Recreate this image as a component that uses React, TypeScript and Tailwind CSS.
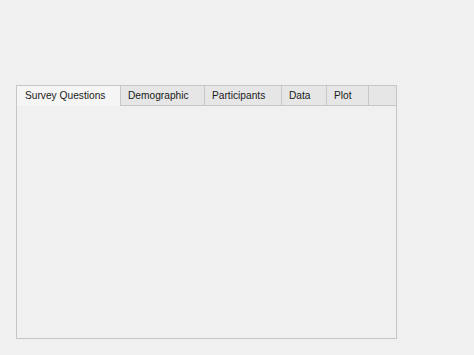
const tabs = [
  { label: "Survey Questions", w: "w-[104px]" },
  { label: "Demographic", w: "w-[84px]" },
  { label: "Participants", w: "w-[77px]" },
  { label: "Data", w: "w-[45px]" },
  { label: "Plot", w: "w-[42px]" },
];

export default function App() {
  return (
    <div
      className="w-[474px] h-[355px] bg-[#f0f0f0] pt-[85px] pl-[16px]"
      style={{ fontFamily: '"Liberation Sans", Arial, sans-serif' }}
    >
      {/* Tab group */}
      <div className="w-[381px] h-[254px] border border-[#c6c6c6] bg-[#f0f0f0] flex flex-col">
        <div className="flex h-[20px] shrink-0">
          {tabs.map((t, i) => (
            <div
              key={t.label}
              className={
                i === 0
                  ? `${t.w} shrink-0 pl-[8px] whitespace-nowrap border-r border-[#c6c6c6] bg-[#f5f5f5] text-[10.2px] text-[#1a1a1a] leading-[19px]`
                  : `${t.w} shrink-0 pl-[7px] whitespace-nowrap border-r border-b border-[#c6c6c6] bg-[#e6e6e6] text-[10.2px] text-[#1a1a1a] leading-[19px]`
              }
            >
              {t.label}
            </div>
          ))}
          <div className="flex-1 border-b border-[#c6c6c6] bg-[#e6e6e6]" />
        </div>
        <div className="flex-1" />
      </div>
    </div>
  );
}
